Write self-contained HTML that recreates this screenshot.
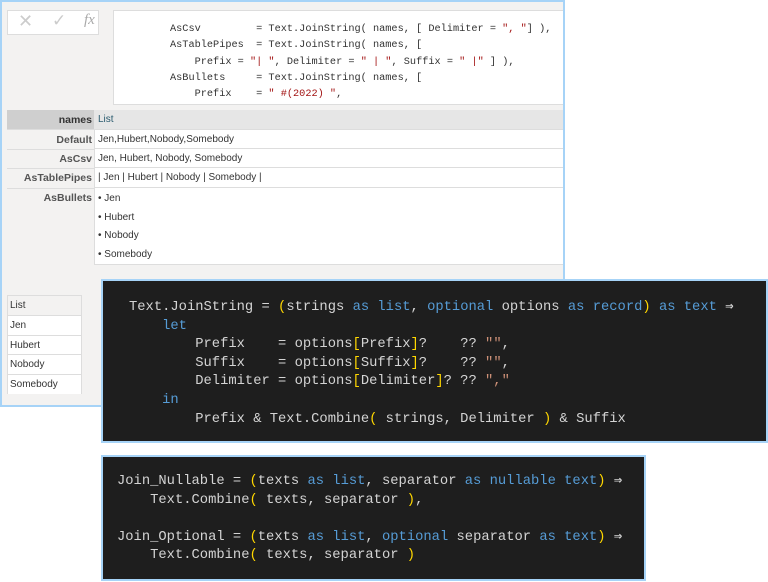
<!DOCTYPE html>
<html><head><meta charset="utf-8"><style>
*{margin:0;padding:0;box-sizing:border-box}
body{width:768px;height:582px;background:#fff;position:relative;overflow:hidden;font-family:"Liberation Sans",sans-serif}
.abs{position:absolute}
#win{left:0;top:0;width:565px;height:407px;background:#f3f2f1;border:2px solid #a6d3f7;border-top:2px solid #a6d3f7}
.mono{font-family:"Liberation Mono","DejaVu Sans Mono",monospace;white-space:pre}
.lbl{position:absolute;left:7px;width:87px;text-align:right;padding-right:2px;font-size:10.5px;font-weight:bold;color:#555}
.row{position:absolute;left:7px;width:556px;border-bottom:1px solid #ddd;background:#fff}
.val{position:absolute;left:98px;font-size:10px;color:#333}
.dark{background:#1e1e1e;border:2px solid #a6d3f7;color:#d4d4d4;font-size:13.8px}
.k{color:#569cd6}.y{color:#ffd700}.s{color:#ce9178}.r{color:#a31515}
</style></head><body>
<div id="win" class="abs"></div>
<div class="abs" style="left:7px;top:10px;width:92px;height:25px;background:#fff;border:1px solid #ddd"></div>
<div class="abs" style="left:18px;top:11px;font-size:18px;color:#ccc">✕</div>
<div class="abs" style="left:52px;top:11px;font-size:17px;color:#ccc">✓</div>
<div class="abs" style="left:84px;top:12px;font-size:15px;color:#aaa;font-family:'Liberation Serif',serif;font-style:italic">fx</div>
<div class="abs" style="left:113px;top:10px;width:450px;height:95px;background:#fff;border:1px solid #ddd;border-right:none"></div>
<div class="abs mono" style="left:170px;top:21px;font-size:10.25px;line-height:16.3px;color:#333">AsCsv         = Text.JoinString( names, [ Delimiter = <span class="r">", "</span>] ),
AsTablePipes  = Text.JoinString( names, [
    Prefix = <span class="r">"| "</span>, Delimiter = <span class="r">" | "</span>, Suffix = <span class="r">" |"</span> ] ),
AsBullets     = Text.JoinString( names, [
    Prefix    = <span class="r">" #(2022) "</span>,</div>

<div class="row" style="top:110px;height:20px;background:#e6e6e6"></div>
<div class="abs" style="left:7px;top:110px;width:87px;height:20px;background:#cfcfcf"></div>
<div class="row" style="top:130px;height:19px"></div>
<div class="row" style="top:149px;height:19px"></div>
<div class="row" style="top:168px;height:20px"></div>
<div class="row" style="top:188px;height:77px"></div>
<div class="abs" style="left:7px;top:130px;width:88px;height:135px;background:#f3f2f1;border-right:1px solid #ddd"></div>
<div class="abs" style="left:7px;top:129px;width:556px;border-top:1px solid #ddd"></div>
<div class="abs" style="left:7px;top:149px;width:88px;border-top:1px solid #ddd"></div>
<div class="abs" style="left:7px;top:168px;width:88px;border-top:1px solid #ddd"></div>
<div class="abs" style="left:7px;top:188px;width:88px;border-top:1px solid #ddd"></div>
<div class="lbl" style="top:114px;color:#333">names</div>
<div class="lbl" style="top:134px">Default</div>
<div class="lbl" style="top:153px">AsCsv</div>
<div class="lbl" style="top:172px">AsTablePipes</div>
<div class="lbl" style="top:192px">AsBullets</div>
<div class="val" style="top:114px;color:#2a5b6e">List</div>
<div class="val" style="top:134px">Jen,Hubert,Nobody,Somebody</div>
<div class="val" style="top:153px">Jen, Hubert, Nobody, Somebody</div>
<div class="val" style="top:172px">| Jen | Hubert | Nobody | Somebody |</div>
<div class="val" style="top:190px;line-height:18.7px">• Jen<br>• Hubert<br>• Nobody<br>• Somebody</div>

<div class="abs" style="left:7px;top:295px;width:75px;height:99px;border:1px solid #ddd;font-size:10px;color:#333">
<div style="height:20px;background:#f3f2f1;padding:4px 2px;border-bottom:1px solid #ddd">List</div>
<div style="height:19.5px;background:#fff;padding:4px 2px;border-bottom:1px solid #ddd">Jen</div>
<div style="height:19.5px;background:#fff;padding:4px 2px;border-bottom:1px solid #ddd">Hubert</div>
<div style="height:19.5px;background:#fff;padding:4px 2px;border-bottom:1px solid #ddd">Nobody</div>
<div style="height:19px;background:#fff;padding:4px 2px">Somebody</div>
</div>

<div class="abs dark mono" style="left:101px;top:279px;width:667px;height:164px;padding:18px 0 0 26px;line-height:18.6px">Text.JoinString = <span class="y">(</span>strings <span class="k">as list</span>, <span class="k">optional</span> options <span class="k">as record</span><span class="y">)</span> <span class="k">as text</span> <b>⇒</b>
    <span class="k">let</span>
        Prefix    = options<span class="y">[</span>Prefix<span class="y">]</span>?    ?? <span class="s">""</span>,
        Suffix    = options<span class="y">[</span>Suffix<span class="y">]</span>?    ?? <span class="s">""</span>,
        Delimiter = options<span class="y">[</span>Delimiter<span class="y">]</span>? ?? <span class="s">","</span>
    <span class="k">in</span>
        Prefix &amp; Text.Combine<span class="y">(</span> strings, Delimiter <span class="y">)</span> &amp; Suffix</div>

<div class="abs dark mono" style="left:101px;top:455px;width:545px;height:126px;padding:16px 0 0 14px;line-height:18.6px">Join_Nullable = <span class="y">(</span>texts <span class="k">as list</span>, separator <span class="k">as nullable text</span><span class="y">)</span> <b>⇒</b>
    Text.Combine<span class="y">(</span> texts, separator <span class="y">)</span>,

Join_Optional = <span class="y">(</span>texts <span class="k">as list</span>, <span class="k">optional</span> separator <span class="k">as text</span><span class="y">)</span> <b>⇒</b>
    Text.Combine<span class="y">(</span> texts, separator <span class="y">)</span></div>
</body></html>
